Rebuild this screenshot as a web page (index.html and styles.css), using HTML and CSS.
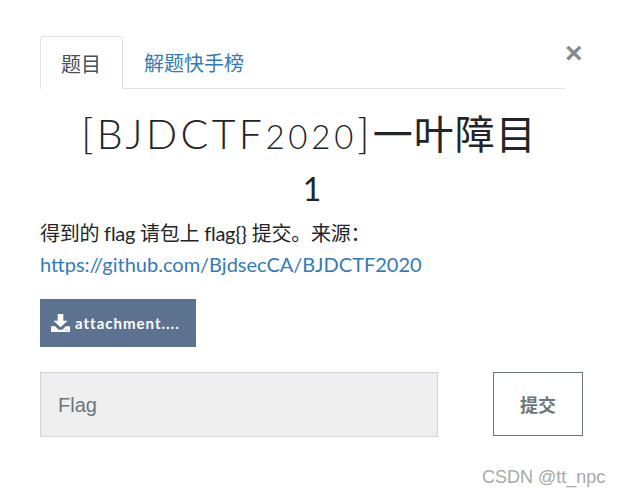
FILE: index.html
```html
<!DOCTYPE html>
<html lang="zh">
<head>
<meta charset="utf-8">
<title>Challenge</title>
<link rel="stylesheet" href="styles.css">
</head>
<body>
<div class="modal">
  <div class="tabs-row">
    <ul class="tabs">
      <li class="tab active">题目</li>
      <li class="tab">解题快手榜</li>
    </ul>
    <span class="close">×</span>
  </div>
  <h2 class="title"><span class="latin">[BJDCTF</span><span class="oldstyle">2020</span><span class="latin">]</span>一叶障目</h2>
  <h3 class="points">1</h3>
  <p class="desc">得到的 flag 请包上 flag{} 提交。来源：<br><a href="#">https://github.com/BjdsecCA/BJDCTF2020</a></p>
  <a class="download" href="#">
    <svg class="dl-icon" viewBox="0 0 20 19" width="19" height="18" aria-hidden="true">
      <path fill="#fff" d="M7 0h6v7h4.500L10 14 2.500 7H7z"/>
      <path fill="#fff" d="M0 13h4.500L8 16.500h4L15.500 13H20v6H0z"/>
      <path fill="#5c728f" d="M15 16.500h1v1h-1zM17 16.500h1v1h-1z"/>
    </svg>
    <span>attachment....</span>
  </a>
  <form class="flag-form">
    <input class="flag-input" type="text" placeholder="Flag">
    <button class="submit" type="button">提交</button>
  </form>
</div>
<div class="watermark">CSDN @tt_npc</div>
</body>
</html>
```
FILE: styles.css
```css
* { box-sizing: border-box; }
html, body { margin: 0; padding: 0; background: #fff; }
body {
  width: 622px;
  height: 497px;
  overflow: hidden;
  position: relative;
  font-family: Lato, "Noto Sans CJK SC", sans-serif;
  color: #212529;
}
.modal { padding: 36px 39px 0 40px; }
.tabs-row { position: relative; width: 525px; }
.tabs {
  display: flex;
  list-style: none;
  margin: 0;
  padding: 0;
  height: 53px;
  border-bottom: 1px solid #dee2e6;
}
.tab {
  font-size: 20px;
  line-height: 30px;
  padding: 12px 21px 10px;
  color: #337ab7;
  height: 53px;
}
.tab.active {
  color: #495057;
  background: #fff;
  border: 1px solid #dee2e6;
  border-bottom-color: #fff;
  border-radius: 4px 4px 0 0;
  padding: 12px 21px 10px 20px;
}
.close {
  position: absolute;
  left: 525px;
  top: -1px;
  font-size: 30px;
  line-height: 36px;
  font-weight: 700;
  color: #85898e;
  font-family: "Liberation Sans", sans-serif;
}
.title {
  margin: 21px 0 0;
  padding-right: 5px;
  text-align: center;
  font-size: 40px;
  line-height: 48px;
  font-weight: 400;
  letter-spacing: 1px;
  white-space: nowrap;
  color: #212529;
}
.latin { letter-spacing: 3.400px; font-weight: 300; font-size: 41px; }
.oldstyle { font-size: 33px; letter-spacing: 3.800px; font-weight: 300; }
.points {
  margin: 10px 0 0;
  text-align: center;
  font-size: 32px;
  line-height: 38px;
  font-weight: 400;
  padding-left: 1px;
}
.desc {
  margin: 10px 0 0;
  font-size: 20px;
  line-height: 31px;
  color: #212529;
  letter-spacing: -0.250px;
}
.desc a { color: #337ab7; text-decoration: none; letter-spacing: 0; }
.download {
  display: flex;
  align-items: center;
  gap: 5px;
  width: 156px;
  height: 48px;
  margin-top: 19px;
  padding-left: 11px;
  background: #5c728f;
  color: #fff;
  font-size: 15px;
  font-weight: 700;
  letter-spacing: 1px;
  text-decoration: none;
  white-space: nowrap;
}
.flag-form {
  display: flex;
  justify-content: space-between;
  align-items: flex-start;
  margin-top: 25px;
  width: 543px;
}
.flag-input {
  width: 398px;
  height: 65px;
  padding: 2px 17px 0;
  background: #efefef;
  border: 1px solid #ced4da;
  font-family: "Liberation Sans", sans-serif;
  font-size: 20px;
  color: #6c757d;
  border-radius: 0;
  outline: none;
}
.flag-input::placeholder { color: #6c757d; opacity: 1; }
.submit {
  width: 90px;
  height: 64px;
  background: #fff;
  border: 1px solid #6c757d;
  color: #6c757d;
  font-family: Lato, "Noto Sans CJK SC", sans-serif;
  font-size: 18px;
  font-weight: 700;
  padding: 0;
  border-radius: 0;
}
.watermark {
  position: absolute;
  left: 482px;
  top: 466px;
  font-family: "Liberation Sans", sans-serif;
  font-size: 18px;
  line-height: 22px;
  color: #a9a9a9;
  white-space: nowrap;
}
```
